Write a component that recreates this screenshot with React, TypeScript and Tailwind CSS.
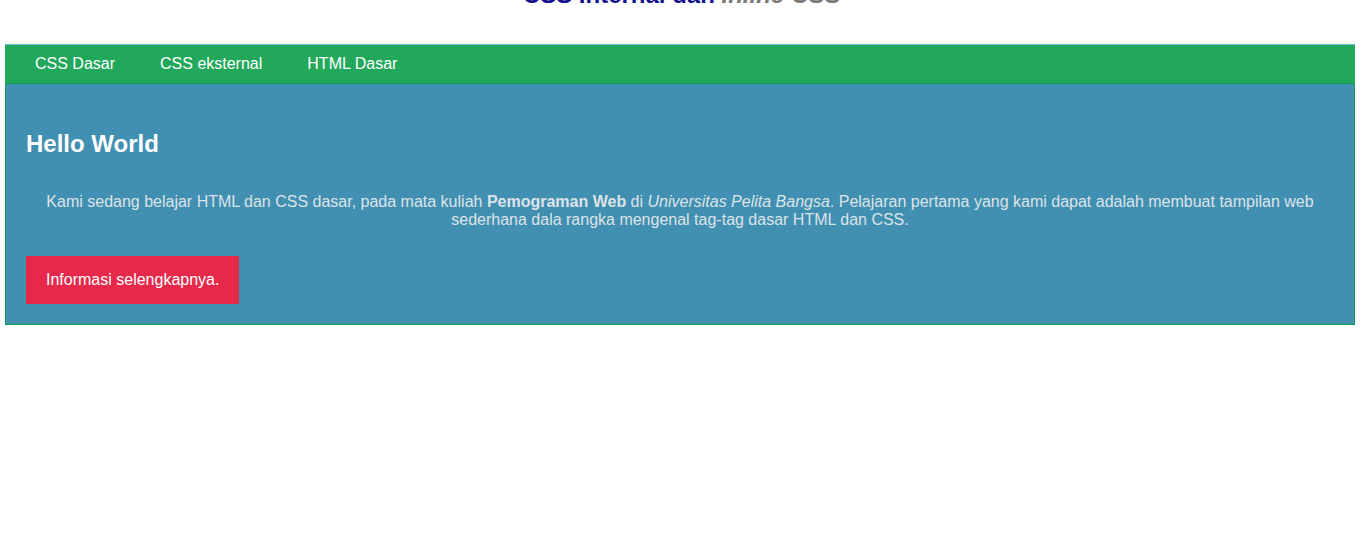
import React from 'react';

const navLinks = ['CSS Dasar', 'CSS eksternal', 'HTML Dasar'];

const App: React.FC = () => {
    return (
        <div className="bg-white min-h-[535px] font-['Liberation_Sans',Arial,sans-serif]">
            <h1 className="-mt-[19px] h-[27px] mb-[36px] text-center text-[24px] leading-[27px] font-bold text-[#12128f]">
                CSS Internal dan <span className="italic text-[#7a7a7a]">Inline</span> <span className="text-[#7a7a7a]">CSS</span>
            </h1>
            <div className="ml-[5px] w-[1350px]">
                <nav className="h-[40px] border-t border-b border-t-[#62c0e4] border-b-[#109a4c] bg-[#21a85a] flex items-center pl-[30px] gap-[45px]">
                    {navLinks.map(link => (
                        <a key={link} href="#" className="text-white text-[16px] leading-[18px]">{link}</a>
                    ))}
                </nav>
                <section className="bg-[#418fb1] border-x border-b border-[#0f9b4b] px-[20px] pt-[46px] pb-[20px]">
                    <h2 className="text-white text-[24px] leading-[27px] font-bold">Hello World</h2>
                    <p className="mt-[36px] text-center text-[16px] leading-[18px] text-[#dde3e8]">
                        Kami sedang belajar HTML dan CSS dasar, pada mata kuliah <b>Pemograman Web</b> di <i>Universitas Pelita Bangsa</i>. Pelajaran pertama yang kami dapat adalah membuat tampilan web sederhana dala rangka mengenal tag-tag dasar HTML dan CSS.
                    </p>
                    <a href="#" className="mt-[27px] inline-block bg-[#e6294a] text-white text-[16px] leading-[18px] px-[20px] py-[15px]">
                        Informasi selengkapnya.
                    </a>
                </section>
            </div>
        </div>
    );
};

export default App;
